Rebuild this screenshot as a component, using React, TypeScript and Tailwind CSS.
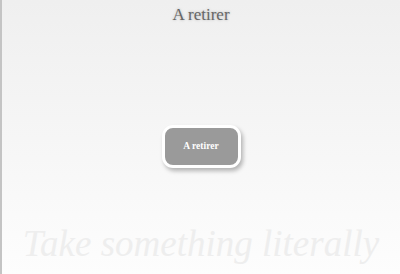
import React from "react";

export default function App() {
  return (
    <div className="w-[400px] h-[274px] overflow-hidden border-l-2 border-[#c4c4c4] bg-gradient-to-b from-[#efefef] to-[#fdfdfd] flex flex-col items-center" style={{ fontFamily: '"Liberation Serif", "Times New Roman", serif' }}>
      <div className="mt-[4px] text-[17px] leading-[22px] text-[#666666] [text-shadow:0_0_3px_rgba(0,0,0,0.25)]">A retirer</div>
      <div className="mt-[99px] w-[79px] h-[43px] rounded-[11px] border-[3px] border-white bg-[#9a9a9a] shadow-[2px_3px_4px_rgba(0,0,0,0.28)] flex items-center justify-center text-white text-[9.5px] font-bold">A retirer</div>
      <div className="mt-[55px] italic text-[37px] leading-[42px] text-[#eeeeee] whitespace-nowrap">Take something literally</div>
    </div>
  );
}
